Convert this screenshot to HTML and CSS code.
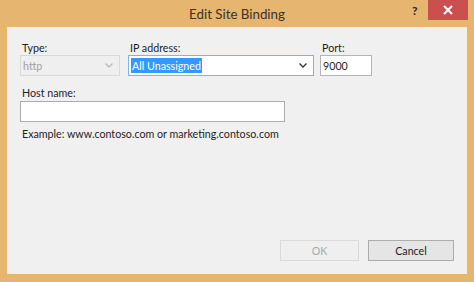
FILE: index.html
```html
<!DOCTYPE html>
<html lang="en">
<head>
    <meta charset="UTF-8">
    <meta name="viewport" content="width=device-width, initial-scale=1.0">
    <title>Edit Site Binding</title>

    <link rel="stylesheet" href="styles.css">
</head>
<body>
    <div class="window">
        <!-- title bar -->
        <div class="titlebar">
            <div class="title">Edit Site Binding</div>
            <div class="help">?</div>
            <div class="close">
                <svg width="10" height="10" viewBox="0 0 10 10">
                    <path d="M1 1 L9 9 M9 1 L1 9" stroke="#fff" stroke-width="2"/>
                </svg>
            </div>
        </div>

        <div class="client">
            <div class="row">
                <div class="field type">
                    <label>Type:</label>
                    <div class="select disabled">
                        <span>http</span>
                        <svg class="chev" width="8" height="5" viewBox="0 0 8 5">
                            <path d="M0.5 0.5 L4 4 L7.5 0.5" stroke="#b8b8b8" stroke-width="1.3" fill="none"/>
                        </svg>
                    </div>
                </div>
                <div class="field ip">
                    <label>IP address:</label>
                    <div class="select focus">
                        <span class="sel">All Unassigned</span>
                        <svg class="chev" width="8" height="5" viewBox="0 0 8 5">
                            <path d="M0.5 0.5 L4 4 L7.5 0.5" stroke="#333" stroke-width="1.3" fill="none"/>
                        </svg>
                    </div>
                </div>
                <div class="field port">
                    <label>Port:</label>
                    <div class="input">9000</div>
                </div>
            </div>

            <div class="host">
                <label>Host name:</label>
                <div class="input"></div>
                <p class="hint">Example: www.contoso.com or marketing.contoso.com</p>
            </div>

            <div class="buttons">
                <button class="btn" disabled>OK</button>
                <button class="btn">Cancel</button>
            </div>
        </div>
    </div>
</body>
</html>
```

FILE: styles.css
```css
*{
    margin: 0;
    padding: 0;
    box-sizing: border-box
}

body{
    width: 474px;
    height: 282px;
    background-color: #e6b56f;
    font-family: Lato, "Open Sans", sans-serif;
    font-size: 10.7px;
    color: #1e1e1e;
    overflow: hidden;
}

.window{
    height: 282px;
    display: flex;
    flex-direction: column;
}

.titlebar{
    height: 27px;
    position: relative;
    display: flex;
    justify-content: center;
    align-items: center;
}

.title{
    font-size: 13.3px;
    color: #3d3222;
    padding-top: 1px;
}

.help{
    position: absolute;
    left: 412px;
    top: 3px;
    font-weight: bold;
    font-size: 12px;
    color: #2a2418;
}

.close{
    position: absolute;
    left: 428px;
    top: 0;
    width: 40px;
    height: 20px;
    background-color: #c9504f;
    display: flex;
    align-items: center;
    justify-content: center;
}

.client{
    flex: 1;
    margin: 0 7px 8px 7px;
    background-color: #f0f0f0;
    border: 1px solid #f7eedf;
    padding: 12px 12px 12px 12px;
    display: flex;
    flex-direction: column;
}

label{
    display: block;
    line-height: 15px;
    padding-left: 2px;
}

.row{
    display: flex;
}

.type{ width: 100px; margin-right: 8px; }
.ip{ width: 186px; margin-right: 6px; }
.port{ width: 52px; }

.select, .input{
    height: 21px;
    border: 1px solid #abadb3;
    background-color: #fff;
    display: flex;
    align-items: center;
    padding-left: 2px;
    line-height: 15px;
}

.select{
    justify-content: space-between;
    padding-right: 6px;
}

.select.disabled{
    border-color: #d9d9d9;
    background-color: #efefef;
    color: #a2a2a2;
}

.select.focus{
    border-color: #7eb4ea;
}

.sel{
    background-color: #3399ff;
    color: #fff;
    padding: 0 1px;
}

.port .input{
    border-color: #b4b4b4;
}

.host{
    margin-top: 9px;
}

.host .input{
    width: 265px;
    margin-top: 1px;
}

.hint{
    margin-top: 4px;
    line-height: 15px;
    padding-left: 2px;
}

.buttons{
    margin-top: auto;
    display: flex;
    justify-content: flex-end;
    gap: 9px;
}

.btn{
    width: 79px;
    height: 21px;
    font-family: inherit;
    font-size: 10.7px;
    color: #1e1e1e;
    background-color: #e5e5e5;
    border: 1px solid #acacac;
}

.btn:last-child{
    width: 86px;
}

.btn:disabled{
    color: #a8a8a8;
    background-color: #efefef;
    border-color: #d9d9d9;
}
```
